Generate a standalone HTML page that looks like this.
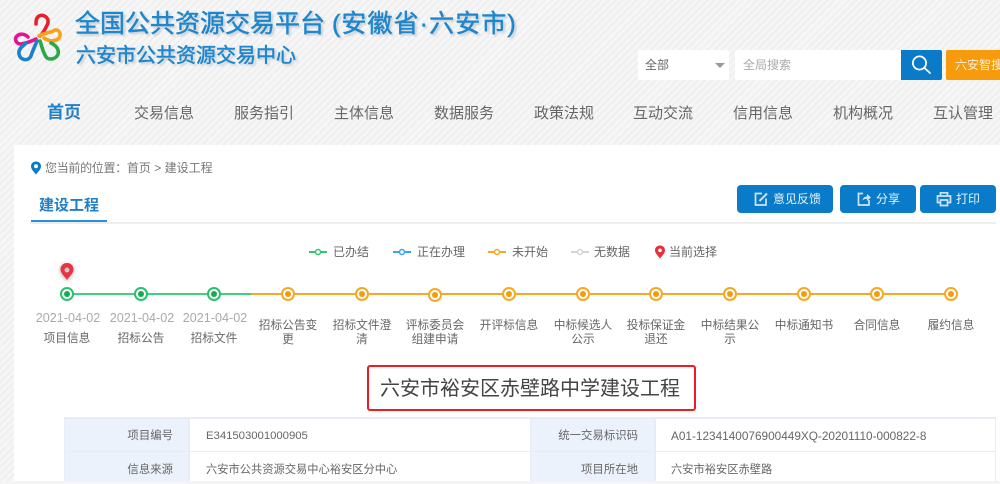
<!DOCTYPE html>
<html lang="zh"><head><meta charset="utf-8">
<style>
*{box-sizing:border-box;margin:0;padding:0}
html,body{width:1000px;height:484px;overflow:hidden}
body{position:relative;font-family:"Liberation Sans","Noto Sans CJK SC",sans-serif;color:#666;background:repeating-linear-gradient(-45deg,#f6f6f6 0,#f6f6f6 3px,#efefef 3px,#efefef 5px)}
.a{position:absolute;white-space:nowrap}
.nav{top:103px;width:100px;text-align:center;font-size:15px;line-height:22px;color:#666}
.btn{top:185px;height:28px;background:#0a7bc8;border-radius:4px;color:#e8f3fb;font-size:12px;line-height:28px}
.btn svg{position:absolute;top:6px}
.btn span{position:absolute;top:0}
.lg{top:245px;font-size:12px;line-height:14px;color:#666}
.dot{position:absolute;top:287px;width:14px;height:14px;border-radius:50%;background:#fff;border:2px solid #27c46b}
.dot::after{content:"";position:absolute;left:2px;top:2px;width:6px;height:6px;border-radius:50%;background:#18a957}
.o{border-color:#f9a826}.o::after{background:#f79a0b}
.d{top:311px;width:70px;text-align:center;font-size:12.6px;line-height:14px;color:#aaa}
.l{width:62px;text-align:center;font-size:11.7px;line-height:14px;color:#666;white-space:normal;word-break:break-all}
.c{position:absolute;font-size:11.4px;line-height:34px;color:#666;height:32px;white-space:nowrap}
.th{background:#ebf2fb;text-align:right;padding-right:15px}
.td{background:#fff;padding-left:16px}
.r2{line-height:37px;height:29px;overflow:hidden}
</style></head><body>

<svg class="a" style="left:10px;top:8px" width="56" height="56" viewBox="0 0 56 56" fill="none" stroke-linecap="round">
<path d="M30 28C34 24 36 20 38 15C39 9 33 6 29 8C26 10 26 13 26 16" stroke="#e8202e" stroke-width="3.6"/>
<path d="M29 28C33 25 41 25 45 22C50 21 52 28 48 31C44 34 38 33 34 30" stroke="#f9a11b" stroke-width="3.6"/>
<path d="M26 31C22 33 17 35 11 36C6 36 4 31 7 28C10 25 15 26 18 29" stroke="#e2148f" stroke-width="3.6"/>
<path d="M27 33C25 38 22 44 21 48C18 54 10 52 9 46C8 41 13 38 16 35" stroke="#1f7fc8" stroke-width="3.6"/>
<path d="M30 33C32 38 33 46 37 50C42 53 50 49 48 42C47 38 43 36 41 35" stroke="#2aa84a" stroke-width="3.6"/>
</svg>

<div class="a" style="left:75px;top:9px;font-size:25px;line-height:30px;font-weight:normal;-webkit-text-stroke:0.5px #1f86cc;color:#1f86cc;text-shadow:2px 2px 2px #bcc6cf">全国公共资源交易平台 <span style="letter-spacing:1.1px">(安徽省·六安市)</span></div>
<div class="a" style="left:76px;top:42px;font-size:20px;line-height:28px;font-weight:normal;-webkit-text-stroke:0.5px #1f86cc;color:#1f86cc;text-shadow:2px 2px 2px #bcc6cf">六安市公共资源交易中心</div>

<div class="a" style="left:638px;top:50px;width:91px;height:30px;background:#fff;border-radius:2px;font-size:12px;line-height:30px;padding-left:7px;color:#666">全部
<div class="a" style="left:77px;top:13px;border-left:5px solid transparent;border-right:5px solid transparent;border-top:5px solid #999"></div></div>
<div class="a" style="left:735px;top:50px;width:166px;height:30px;background:#fff;border-radius:2px 0 0 2px;font-size:12px;line-height:30px;padding-left:8px;color:#aaa">全局搜索</div>
<div class="a" style="left:901px;top:50px;width:41px;height:30px;background:#0a7bc8;border-radius:0 2px 2px 0">
<svg class="a" style="left:10px;top:4px" width="22" height="22" viewBox="0 0 22 22" fill="none" stroke="#fff" stroke-width="1.8"><circle cx="8.5" cy="9" r="6.6"/><path d="M13.500 14L19 19" stroke-linecap="round"/></svg></div>
<div class="a" style="left:946px;top:50px;width:54px;height:30px;background:#f79a0b;border-radius:2px 0 0 2px;overflow:hidden;font-size:12px;line-height:30px;padding-left:9px;color:#fff2dc">六安智搜</div>

<div class="a nav" style="left:14px;font-size:17px;font-weight:bold;color:#1f7fc8;top:102px;line-height:22px">首页</div>
<div class="a nav" style="left:114px">交易信息</div>
<div class="a nav" style="left:214px">服务指引</div>
<div class="a nav" style="left:314px">主体信息</div>
<div class="a nav" style="left:414px">数据服务</div>
<div class="a nav" style="left:514px">政策法规</div>
<div class="a nav" style="left:613px">互动交流</div>
<div class="a nav" style="left:713px">信用信息</div>
<div class="a nav" style="left:813px">机构概况</div>
<div class="a nav" style="left:913px">互认管理</div>

<div class="a" style="left:14px;top:145px;width:986px;height:336px;background:#fff"></div>
<div class="a" style="left:0;top:481px;width:1000px;height:3px;background:#f4f4f4"></div>

<svg class="a" style="left:30px;top:161px" width="12" height="14" viewBox="0 0 12 14"><path fill-rule="evenodd" fill="#0a7bc8" d="M6 0.5C2.9 0.5 1 2.7 1 5.2C1 8.4 4.4 11.3 6 13.5C7.6 11.3 11 8.4 11 5.2C11 2.7 9.100 0.5 6 0.5ZM6 3.2A2 2 0 1 1 6 7.2A2 2 0 1 1 6 3.2Z"/></svg>
<div class="a" style="left:45px;top:161px;font-size:12px;line-height:14px;color:#777"><span style="letter-spacing:-.3px">您当前的位置：</span>首页 &gt; 建设工程</div>

<div class="a" style="left:39px;top:196px;font-size:15px;line-height:20px;font-weight:bold;color:#1f7fc8">建设工程</div>
<div class="a" style="left:30px;top:222px;width:966px;height:2px;background:#eee"></div>
<div class="a" style="left:31px;top:220px;width:76px;height:2px;background:#2a8fd8"></div>

<div class="a btn" style="left:737px;width:96px">
<svg style="left:16px" width="16" height="16" viewBox="0 0 16 16" fill="none" stroke="#cfe5f5" stroke-width="1.7"><path d="M9 2.500H2.500V14H13V7.500"/><path d="M6.500 10L14 2.500" stroke-width="2"/></svg>
<span style="left:36px">意见反馈</span></div>
<div class="a btn" style="left:840px;width:76px">
<svg style="left:16px" width="16" height="16" viewBox="0 0 16 16" fill="none" stroke="#cfe5f5" stroke-width="1.7"><path d="M7 2.500H2.500V14H13V9"/><path d="M6.500 9.500C7 6.500 9 5.500 11 5.500V3L15 6.500L11 10V7.800C9.500 7.800 8 8.300 6.500 9.500Z" fill="#cfe5f5" stroke="none"/></svg>
<span style="left:36px">分享</span></div>
<div class="a btn" style="left:920px;width:76px">
<svg style="left:16px" width="16" height="16" viewBox="0 0 16 16" fill="none" stroke="#cfe5f5" stroke-width="1.700"><path d="M4.500 5V1.800H11.500V5"/><path d="M4 11.500H1.500V5H14.500V11.500H12"/><path d="M4.500 9H11.500V14.500H4.500Z"/></svg>
<span style="left:36px">打印</span></div>

<svg class="a" style="left:309px;top:247px" width="18" height="10"><path d="M0 5H18" stroke="#2fc872" stroke-width="2"/><circle cx="9" cy="5" r="2.500" fill="#fff" stroke="#2fc872" stroke-width="1.500"/></svg>
<div class="a lg" style="left:333px">已办结</div>
<svg class="a" style="left:393px;top:247px" width="18" height="10"><path d="M0 5H18" stroke="#3ba4f0" stroke-width="2"/><circle cx="9" cy="5" r="2.500" fill="#fff" stroke="#3ba4f0" stroke-width="1.500"/></svg>
<div class="a lg" style="left:417px">正在办理</div>
<svg class="a" style="left:488px;top:247px" width="18" height="10"><path d="M0 5H18" stroke="#f9a826" stroke-width="2"/><circle cx="9" cy="5" r="2.500" fill="#fff" stroke="#f9a826" stroke-width="1.500"/></svg>
<div class="a lg" style="left:512px">未开始</div>
<svg class="a" style="left:571px;top:247px" width="18" height="10"><path d="M0 5H18" stroke="#d5d5d5" stroke-width="2"/><circle cx="9" cy="5" r="2.500" fill="#fff" stroke="#d5d5d5" stroke-width="1.500"/></svg>
<div class="a lg" style="left:594px">无数据</div>
<svg class="a" style="left:654px;top:245px" width="12" height="14" viewBox="0 0 12 14"><path fill-rule="evenodd" fill="#e8303c" d="M6 0.500C3 0.500 1 2.700 1 5.200C1 8.400 4.400 11.300 6 13.500C7.600 11.300 11 8.400 11 5.200C11 2.700 9 0.500 6 0.500ZM6 3.500A1.800 1.800 0 1 1 6 7.100A1.800 1.800 0 1 1 6 3.500Z"/></svg>
<div class="a lg" style="left:669px">当前选择</div>

<svg class="a" style="left:55px;top:260px;overflow:visible;filter:drop-shadow(0 1px 2px rgba(0,0,0,.35))" width="24" height="26" viewBox="0 0 24 26"><path fill-rule="evenodd" fill="#ea3340" d="M12 3C8 3 5.500 6 5.500 9.300C5.500 13.500 9.800 16.500 12 20C14.200 16.500 18.500 13.500 18.500 9.300C18.500 6 16 3 12 3ZM12 7.500A2.500 2.500 0 1 1 12 12.500A2.500 2.500 0 1 1 12 7.500Z"/></svg>

<div class="a" style="left:67px;top:293px;width:184px;height:2px;background:#3fcf80"></div>
<div class="a" style="left:251px;top:293px;width:700px;height:2px;background:#f9a826"></div>

<div class="dot a" style="left:60px"></div><div class="dot a" style="left:134px"></div><div class="dot a" style="left:207px"></div>
<div class="dot o a" style="left:281px"></div><div class="dot o a" style="left:355px"></div><div class="dot o a" style="left:428px;top:288px"></div><div class="dot o a" style="left:502px"></div><div class="dot o a" style="left:576px"></div><div class="dot o a" style="left:649px"></div><div class="dot o a" style="left:723px"></div><div class="dot o a" style="left:797px"></div><div class="dot o a" style="left:870px"></div><div class="dot o a" style="left:944px"></div>

<div class="a d" style="left:33px">2021-04-02</div><div class="a d" style="left:107px">2021-04-02</div><div class="a d" style="left:180px">2021-04-02</div>
<div class="a l" style="left:36px;top:332px">项目信息</div>
<div class="a l" style="left:110px;top:332px">招标公告</div>
<div class="a l" style="left:183px;top:332px">招标文件</div>
<div class="a l" style="left:257px;top:319px">招标公告变更</div>
<div class="a l" style="left:331px;top:319px">招标文件澄清</div>
<div class="a l" style="left:404px;top:319px">评标委员会组建申请</div>
<div class="a l" style="left:478px;top:319px">开评标信息</div>
<div class="a l" style="left:552px;top:319px">中标候选人公示</div>
<div class="a l" style="left:625px;top:319px">投标保证金退还</div>
<div class="a l" style="left:699px;top:319px">中标结果公示</div>
<div class="a l" style="left:773px;top:319px">中标通知书</div>
<div class="a l" style="left:846px;top:319px">合同信息</div>
<div class="a l" style="left:920px;top:319px">履约信息</div>

<div class="a" style="left:367px;top:365px;width:329px;height:46px;border:2px solid #ee1c25;border-radius:3px;background:#fff"></div>
<div class="a" style="left:380px;top:377px;font-size:20px;line-height:24px;color:#444">六安市裕安区赤壁路中学建设工程</div>

<div class="a" style="left:64px;top:417px;width:932px;height:64px;background:#e8edf3"></div>
<div class="c th" style="left:65px;top:419px;width:123px">项目编号</div>
<div class="c td" style="left:190px;top:419px;width:340px;letter-spacing:-.05px">E341503001000905</div>
<div class="c th" style="left:531px;top:419px;width:123px;padding-right:16px">统一交易标识码</div>
<div class="c td" style="left:656px;top:419px;width:339px;padding-left:15px;font-size:11.8px">A01-1234140076900449XQ-20201110-000822-8</div>
<div class="c th r2" style="left:65px;top:452px;width:123px">信息来源</div>
<div class="c td r2" style="left:190px;top:452px;width:340px;font-size:11.25px">六安市公共资源交易中心裕安区分中心</div>
<div class="c th r2" style="left:531px;top:452px;width:123px;padding-right:16px">项目所在地</div>
<div class="c td r2" style="left:656px;top:452px;width:339px;padding-left:15px;font-size:11.25px">六安市裕安区赤壁路</div>

</body></html>
